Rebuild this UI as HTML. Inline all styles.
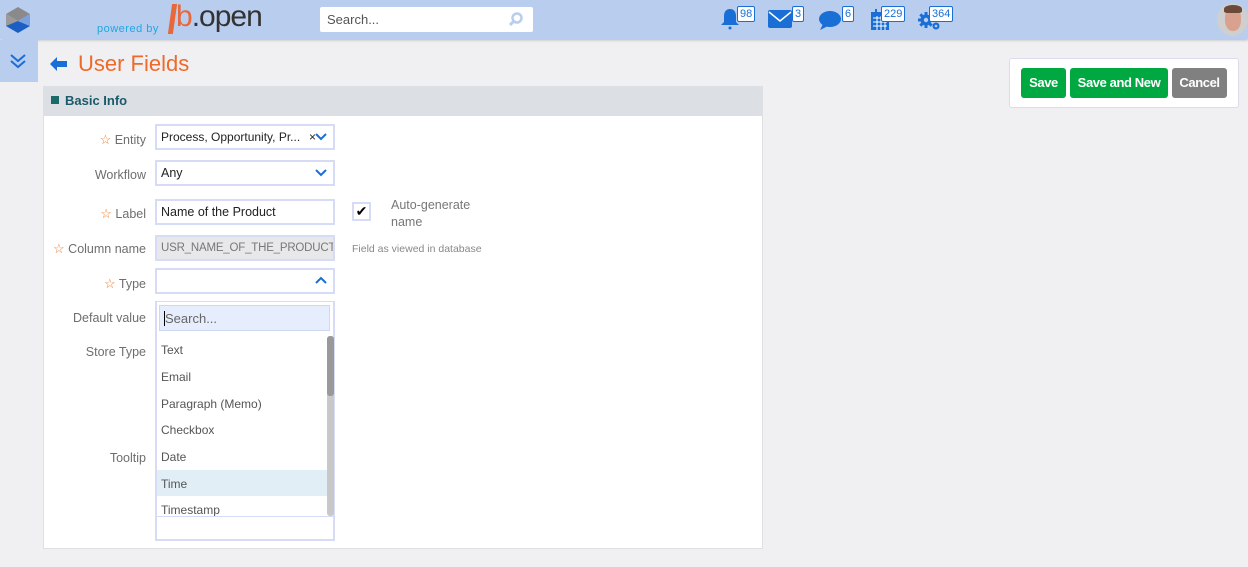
<!DOCTYPE html>
<html><head><meta charset="utf-8"><style>
*{box-sizing:border-box;margin:0;padding:0}
body{width:1248px;height:567px;background:#f0f0f3;font-family:"Liberation Sans",sans-serif;position:relative;overflow:hidden;font-size:13px}
.a{position:absolute}
.hdr{left:0;top:0;width:1248px;height:39px;background:#b9cdee;box-shadow:0 1px 3px rgba(0,0,0,.25)}
.lbl{position:absolute;right:1102px;color:#6e6e6e;font-size:12.5px;text-align:right;white-space:nowrap}
.st{color:#f07a2a;font-size:13px}
.inp{position:absolute;left:155px;width:180px;height:26px;border:2px solid #d6dcf5;background:#fff;font-size:12.5px;color:#222;padding:4px 4px;white-space:nowrap;overflow:hidden}
.chev{position:absolute;right:6px;top:6px}
.it{position:absolute;left:157px;width:170px;height:26px;padding:6px 4px;color:#555;font-size:12px}
.badge{position:absolute;background:#fff;border:1px solid #1a6fd6;color:#1a6fd6;font-size:11px;padding:0 2px;line-height:14px;border-radius:2px}
.btn{position:absolute;top:68px;height:30px;border-radius:3px;color:#fff;font-size:13px;font-weight:bold;text-align:center;line-height:30px;letter-spacing:-.4px}
</style></head><body>
<div class="a hdr"></div>
<svg class="a" style="left:5px;top:6px" width="26" height="28" viewBox="0 0 26 28"><polygon points="13,1 25,8 13,15 1,8" fill="#8a8a8a"/><polygon points="1,8 13,15 13,27 1,20" fill="#9a9a9a"/><polygon points="13,15 25,20 13,27 1,20" fill="#1c5fc4"/><polygon points="13,15 25,8 25,20" fill="#7aa0e0"/></svg>
<div class="a" style="left:97px;top:23px;font-size:11px;color:#1fa8e0;letter-spacing:.5px">powered by</div>
<div class="a" style="left:170px;top:4px;width:5px;height:30px;background:#e8683a;transform:skewX(-8deg)"></div>
<div class="a" style="left:176px;top:0px;font-size:30px;line-height:34px;color:#e8683a;letter-spacing:-1px">b<span style="color:#333">.open</span></div>
<div class="a" style="left:320px;top:7px;width:213px;height:25px;background:#fff;border-radius:2px;color:#555;font-size:13px;padding:5px 7px">Search...</div>
<svg class="a" style="left:509px;top:12px" width="14" height="14"><circle cx="8" cy="6" r="4.5" fill="none" stroke="#b9cdee" stroke-width="2.5"/><line x1="5" y1="9" x2="1" y2="13" stroke="#b9cdee" stroke-width="3"/></svg>
<svg class="a" style="left:720px;top:8px" width="20" height="22"><path d="M10 1c-4 0-6 3-6 7v6l-3 3h18l-3-3V8c0-4-2-7-6-7z" fill="#1a6fd6"/><circle cx="10" cy="20" r="1.5" fill="#1a6fd6"/></svg>
<div class="badge" style="left:737px;top:6px">98</div>
<svg class="a" style="left:768px;top:9px" width="26" height="20"><rect x="0" y="1" width="24" height="18" rx="2" fill="#1a6fd6"/><path d="M1 3l11 9 11-9" stroke="#fff" stroke-width="1.5" fill="none"/></svg>
<div class="badge" style="left:792px;top:6px">3</div>
<svg class="a" style="left:818px;top:10px" width="24" height="20"><ellipse cx="12" cy="9" rx="11" ry="8" fill="#1a6fd6"/><path d="M5 14l-3 6 8-4z" fill="#1a6fd6"/></svg>
<div class="badge" style="left:842px;top:6px">6</div>
<svg class="a" style="left:870px;top:8px" width="22" height="23"><rect x="1" y="4" width="18" height="18" fill="#1a6fd6"/><path d="M3 10h14M3 14h14M3 18h14M7 8v14M11 8v14M15 8v14" stroke="#fff" stroke-width="1"/><rect x="5" y="1" width="2" height="5" fill="#1a6fd6"/></svg>
<div class="badge" style="left:881px;top:6px">229</div>
<svg class="a" style="left:918px;top:11px" width="24" height="20" viewBox="0 0 24 20"><g fill="#1a6fd6"><circle cx="8" cy="9" r="5.5"/><rect x="6.5" y="1" width="3" height="16"/><rect x="0" y="7.5" width="16" height="3"/><rect x="6.5" y="1" width="3" height="16" transform="rotate(45 8 9)"/><rect x="6.5" y="1" width="3" height="16" transform="rotate(-45 8 9)"/><circle cx="18" cy="15" r="3.5"/></g><circle cx="8" cy="9" r="2.2" fill="#b9cdee"/><circle cx="18" cy="15" r="1.3" fill="#b9cdee"/></svg>
<div class="badge" style="left:929px;top:6px">364</div>
<div class="a" style="left:1217px;top:3px;width:31px;height:33px;border-radius:50%;background:#cfcfcf;overflow:hidden"><div class="a" style="left:8px;top:4px;width:16px;height:24px;border-radius:45%;background:#d9a28e"></div><div class="a" style="left:7px;top:2px;width:18px;height:8px;border-radius:50% 50% 20% 20%;background:#6b4a3a"></div></div>
<div class="a" style="left:0;top:40px;width:38px;height:42px;background:#b9cdee"></div>
<svg class="a" style="left:9px;top:53px" width="18" height="16"><path d="M2 2l7 6 7-6M2 8l7 6 7-6" stroke="#1a6fd6" stroke-width="2" fill="none"/></svg>
<svg class="a" style="left:50px;top:57px" width="17" height="14"><path d="M0 7l7-7v4h10v6H7v4z" fill="#1a6fd6"/></svg>
<div class="a" style="left:78px;top:51px;font-size:22px;color:#ee6a2a">User Fields</div>
<div class="a" style="left:43px;top:86px;width:720px;height:463px;background:#fff;border:1px solid #dcdfe4"></div>
<div class="a" style="left:43px;top:86px;width:720px;height:30px;background:#dcdfe4;border-radius:3px 3px 0 0"></div>
<div class="a" style="left:51px;top:96px;width:8px;height:8px;background:#1a6a6a"></div>
<div class="a" style="left:65px;top:93px;font-size:13px;font-weight:bold;color:#1a5a6a">Basic Info</div>
<div class="lbl" style="top:132px"><span class="st">☆</span> Entity</div>
<div class="lbl" style="top:168px">Workflow</div>
<div class="lbl" style="top:206px"><span class="st">☆</span> Label</div>
<div class="lbl" style="top:241px"><span class="st">☆</span> Column name</div>
<div class="lbl" style="top:276px"><span class="st">☆</span> Type</div>
<div class="lbl" style="top:311px">Default value</div>
<div class="lbl" style="top:345px">Store Type</div>
<div class="lbl" style="top:451px">Tooltip</div>
<div class="inp" style="top:124px;font-size:12px">Process, Opportunity, Pr... <span style="position:absolute;right:17px;top:4px;background:#fff">×</span><svg class="chev" width="12" height="10"><path d="M1 2l5 5 5-5" stroke="#1a6fd6" stroke-width="2" fill="none"/></svg></div>
<div class="inp" style="top:160px">Any<svg class="chev" width="12" height="10"><path d="M1 2l5 5 5-5" stroke="#1a6fd6" stroke-width="2" fill="none"/></svg></div>
<div class="inp" style="top:199px">Name of the Product</div>
<div class="inp" style="top:235px;background:#e8e8ea;color:#777;font-size:11.5px;letter-spacing:-.2px;padding-top:5px">USR_NAME_OF_THE_PRODUCT</div>
<div class="inp" style="top:268px"><svg class="chev" width="12" height="10"><path d="M1 7l5-5 5 5" stroke="#1a6fd6" stroke-width="2" fill="none"/></svg></div>
<div class="a" style="left:352px;top:202px;width:19px;height:19px;border:2px solid #d6dcf5;background:#fff;text-align:center;font-size:14px;line-height:15px">✔</div>
<div class="a" style="left:391px;top:197px;font-size:12.5px;color:#777;line-height:17px">Auto-generate<br>name</div>
<div class="a" style="left:352px;top:243px;font-size:10.5px;color:#888">Field as viewed in database</div>
<div class="a" style="left:155px;top:301px;width:180px;height:240px;border:2px solid #d6dcf5;background:#fff;border-top:1px solid #ddd"></div>
<div class="a" style="left:159px;top:305px;width:171px;height:26px;background:#e6edfc;border:1px solid #cfd8f2;color:#666;padding:5px 4px;font-size:13px"><span style="border-left:1px solid #000"></span>Search...</div>
<div class="a" style="left:157px;top:470px;width:170px;height:26px;background:#e2eef6"></div>
<div class="it" style="top:337px">Text</div>
<div class="it" style="top:364px">Email</div>
<div class="it" style="top:391px">Paragraph (Memo)</div>
<div class="it" style="top:417px">Checkbox</div>
<div class="it" style="top:444px">Date</div>
<div class="it" style="top:471px">Time</div>
<div class="it" style="top:497px;height:19px;overflow:hidden">Timestamp</div>
<div class="a" style="left:157px;top:516px;width:176px;height:1px;background:#d6dcf5"></div>
<div class="a" style="left:327px;top:336px;width:7px;height:180px;background:#c8c8c8;border-radius:3px"></div>
<div class="a" style="left:327px;top:336px;width:7px;height:60px;background:#999;border-radius:3px"></div>
<div class="a" style="left:1009px;top:58px;width:230px;height:50px;background:#fff;border:1px solid #dcdcee;border-radius:3px"></div>
<div class="btn" style="left:1021px;width:45px;background:#00a842">Save</div>
<div class="btn" style="left:1070px;width:98px;background:#00a842">Save and New</div>
<div class="btn" style="left:1172px;width:55px;background:#808080">Cancel</div>
</body></html>
